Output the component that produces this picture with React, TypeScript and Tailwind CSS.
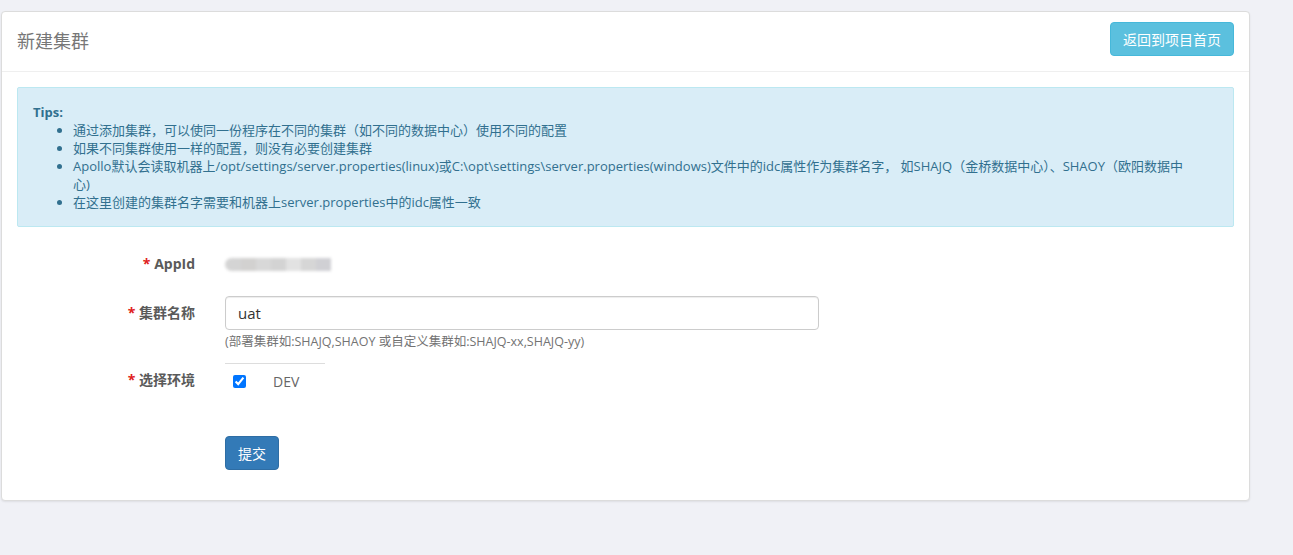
import { useState } from "react";

const font = { fontFamily: '"Open Sans", "Noto Sans CJK SC", sans-serif' };

function Label({ text }: { text: string }) {
  return (
    <label className="w-[178px] shrink-0 pt-[7px] text-right text-[14px] leading-[20px] font-bold text-[#5a5a5a]">
      <span className="text-[#e02020]">*</span> {text}
    </label>
  );
}

export default function App() {
  const [name, setName] = useState("uat");
  const [dev, setDev] = useState(true);

  return (
    <div className="min-h-[555px] w-full bg-[#f0f1f6] pt-[11px] pl-px" style={font}>
      <div className="w-[1249px] rounded-[4px] border border-[#dcdcdc] bg-white shadow-[0_1px_2px_rgba(0,0,0,0.08)]">
        {/* header */}
        <div className="flex h-[60px] justify-between border-b border-[#efefef] px-[15px]">
          <h3 className="self-center text-[18px] font-normal text-[#777]">新建集群</h3>
          <button className="mt-[10px] h-[34px] self-start rounded-[4px] border border-[#46b8da] bg-[#5bc0de] px-[12px] text-[14px] text-white">
            返回到项目首页
          </button>
        </div>

        <div className="px-[15px] pt-[15px] pb-[30px]">
          {/* tips */}
          <div className="rounded-[2px] border border-[#bce8f1] bg-[#d9edf7] px-[15px] py-[15px] text-[13px] leading-[18px] text-[#31708f]">
            <strong className="font-bold">Tips:</strong>
            <ul className="list-disc pl-[40px]">
              <li>通过添加集群，可以使同一份程序在不同的集群（如不同的数据中心）使用不同的配置</li>
              <li>如果不同集群使用一样的配置，则没有必要创建集群</li>
              <li>
                Apollo默认会读取机器上/opt/settings/server.properties(linux)或C:\opt\settings\server.properties(windows)文件中的idc属性作为集群名字， 如SHAJQ（金桥数据中心）、SHAOY（欧阳数据中
                <br />
                心)
              </li>
              <li>在这里创建的集群名字需要和机器上server.properties中的idc属性一致</li>
            </ul>
          </div>

          {/* form */}
          <form className="mt-[20px] flex flex-col" onSubmit={(e) => e.preventDefault()}>
            <div className="mb-[15px] flex gap-[30px]">
              <Label text="AppId" />
              <div className="flex h-[34px] items-center">
                <div className="flex h-[13px] blur-[1.5px]">
                  <span className="w-[16px] rounded-l-full bg-[#d4d4d4]" />
                  <span className="w-[15px] bg-[#d2d1d0]" />
                  <span className="w-[15px] bg-[#d8d8d8]" />
                  <span className="w-[15px] bg-[#d3d3d3]" />
                  <span className="w-[15px] bg-[#e2e2e2]" />
                  <span className="w-[15px] bg-[#d6d6d6]" />
                  <span className="w-[15px] bg-[#d0d0d4]" />
                </div>
              </div>
            </div>

            <div className="mb-[13px] flex gap-[30px]">
              <Label text="集群名称" />
              <div className="w-[594px]">
                <input
                  value={name}
                  onChange={(e) => setName(e.target.value)}
                  className="h-[34px] w-full rounded-[4px] border border-[#ccc] px-[12px] text-[15px] text-[#333] shadow-[inset_0_1px_1px_rgba(0,0,0,0.075)] outline-none"
                />
                <p className="mt-[3px] text-[12.5px] leading-[17px] text-[#737373]">
                  (部署集群如:SHAJQ,SHAOY 或自定义集群如:SHAJQ-xx,SHAJQ-yy)
                </p>
              </div>
            </div>

            <div className="flex gap-[30px]">
              <Label text="选择环境" />
              <div>
                <div className="w-[100px] border-t border-[#dddddd]" />
                <label className="mt-[11px] flex h-[13px] items-center text-[14px] text-[#666]">
                  <input
                    type="checkbox"
                    checked={dev}
                    onChange={(e) => setDev(e.target.checked)}
                    className="ml-[8px] h-[13px] w-[13px]"
                  />
                  <span className="ml-[27px]">DEV</span>
                </label>
              </div>
            </div>

            <div className="mt-[46px] pl-[208px]">
              <button
                type="submit"
                className="h-[34px] rounded-[4px] border border-[#2e6da4] bg-[#337ab7] px-[12px] text-[14px] text-white"
              >
                提交
              </button>
            </div>
          </form>
        </div>
      </div>
    </div>
  );
}
